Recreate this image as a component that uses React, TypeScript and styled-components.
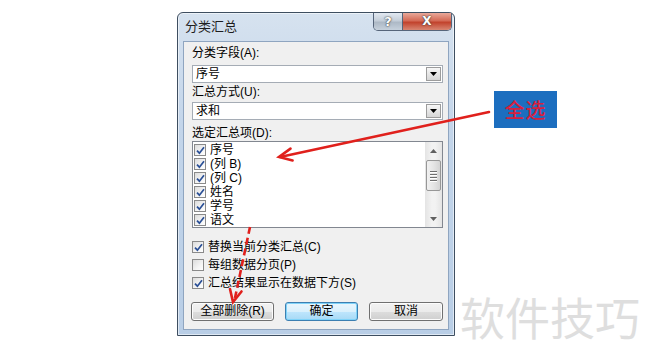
import React from "react";
import styled, { createGlobalStyle } from "styled-components";

const Global = createGlobalStyle`
  html, body { margin: 0; padding: 0; background: #fff; }
  body { font-family: "Liberation Sans", "Noto Sans CJK SC", sans-serif; }
`;

const Page = styled.div`
  position: relative;
  width: 647px;
  height: 364px;
  overflow: hidden;
  box-sizing: border-box;
  padding: 12px 0 0 177px;
  display: flex;
  align-items: flex-start;
  background: #fff;
`;

const Dialog = styled.div`
  width: 278px;
  height: 324px;
  box-sizing: border-box;
  border: 1px solid #3e4e60;
  border-radius: 6px 6px 0 0;
  background: linear-gradient(180deg, #d6e2ef 0%, #c3d5ea 35%, #b9cee6 100%);
  box-shadow: inset 0 0 0 1px rgba(255, 255, 255, 0.55);
  display: flex;
  flex-direction: column;
  padding: 0 5px 5px 5px;
`;

const TitleBar = styled.div`
  height: 28px;
  display: flex;
  align-items: flex-start;
  justify-content: space-between;
  margin-right: -3px;
`;

const Title = styled.div`
  font-size: 13px;
  line-height: 28px;
  padding-left: 2px;
  color: #1e1e1e;
`;

const CaptionGroup = styled.div`
  display: flex;
  border: 1px solid #56657a;
  border-top: none;
  border-radius: 0 0 5px 5px;
  overflow: hidden;
`;

const CaptionButton = styled.div<{ $close?: boolean }>`
  width: ${(p) => (p.$close ? 48 : 28)}px;
  height: 17px;
  display: flex;
  align-items: center;
  justify-content: center;
  color: #fff;
  font-family: "DejaVu Sans", sans-serif;
  font-weight: bold;
  font-size: ${(p) => (p.$close ? 12 : 13)}px;
  line-height: 17px;
  text-shadow: 0 0 1px #333, 0 0 2px #444;
  background: ${(p) =>
    p.$close
      ? "linear-gradient(180deg, #e9a99a 0%, #d46a56 45%, #c2432d 55%, #d88672 100%)"
      : "linear-gradient(180deg, #e2e9f1 0%, #c4ced9 45%, #adb9c6 55%, #c6d1dc 100%)"};
  border-left: ${(p) => (p.$close ? "1px solid #56657a" : "none")};
`;

const Client = styled.div`
  flex: 1;
  background: #f0f0f0;
  border: 1px solid #8fa5c0;
  display: flex;
  flex-direction: column;
  padding: 4px 5px 0 8px;
`;

const Label = styled.div<{ $mt?: number }>`
  font-size: 12px;
  line-height: 14px;
  height: 14px;
  color: #000;
  margin-top: ${(p) => p.$mt ?? 0}px;
  white-space: nowrap;
`;

const Combo = styled.div<{ $mt: number }>`
  height: 18px;
  box-sizing: border-box;
  margin-top: ${(p) => p.$mt}px;
  border: 1px solid #a5acb5;
  background: #fff;
  display: flex;
  align-items: center;
  justify-content: space-between;
  padding: 0 1px 0 3px;
  font-size: 12px;
  line-height: 14px;
  color: #000;
`;

const DropButton = styled.div`
  width: 15px;
  height: 14px;
  box-sizing: border-box;
  border: 1px solid #9c9c9c;
  background: linear-gradient(180deg, #f7f7f7 0%, #e6e6e6 50%, #d6d6d6 100%);
  display: flex;
  align-items: center;
  justify-content: center;
`;

const ListBox = styled.div`
  margin-top: 1px;
  height: 87px;
  box-sizing: border-box;
  border: 1px solid #828790;
  background: #fff;
  display: flex;
`;

const ListItems = styled.div`
  flex: 1;
  padding: 1px 0 0 1px;
  display: flex;
  flex-direction: column;
`;

const ListItem = styled.div`
  height: 14px;
  display: flex;
  align-items: center;
  gap: 4px;
  font-size: 12px;
  color: #000;
  white-space: nowrap;
`;

const ItemText = styled.div<{ $h: number }>`
  height: ${(p) => p.$h}px;
  line-height: ${(p) => p.$h}px;
`;

const Box = styled.div`
  width: 12px;
  height: 12px;
  box-sizing: border-box;
  border: 1px solid #8a8a8a;
  background: linear-gradient(135deg, #dcdcdc 0%, #f4f4f4 60%, #ffffff 100%);
  display: flex;
  align-items: center;
  justify-content: center;
  flex: none;
`;

const ScrollBar = styled.div`
  width: 17px;
  background: linear-gradient(90deg, #e4e4e4 0%, #f2f2f2 40%, #f2f2f2 60%, #e4e4e4 100%);
  display: flex;
  flex-direction: column;
  align-items: center;
`;

const ArrowCell = styled.div`
  width: 17px;
  height: 17px;
  display: flex;
  align-items: center;
  justify-content: center;
`;

const Thumb = styled.div`
  width: 15px;
  height: 31px;
  box-sizing: border-box;
  border: 1px solid #979797;
  border-radius: 2px;
  background: linear-gradient(90deg, #f1f1f1 0%, #e5e5e5 50%, #d4d4d4 100%);
  display: flex;
  flex-direction: column;
  align-items: center;
  justify-content: center;
  gap: 2px;
  margin-top: 1px;
`;

const Grip = styled.div`
  width: 7px;
  height: 1px;
  background: #6f6f6f;
  box-shadow: 0 1px 0 #fff;
`;

const Spacer = styled.div`
  flex: 1;
`;

const Options = styled.div`
  margin-top: 10px;
  display: flex;
  flex-direction: column;
`;

const OptionRow = styled.div`
  height: 18px;
  display: flex;
  align-items: center;
  gap: 4px;
  font-size: 12px;
  color: #000;
  white-space: nowrap;
`;

const ButtonRow = styled.div`
  margin-top: 10px;
  margin-left: -1px;
  display: flex;
  gap: 11px;
`;

const Button = styled.div<{ $w: number; $default?: boolean }>`
  width: ${(p) => p.$w}px;
  height: 19px;
  box-sizing: border-box;
  border: 1px solid ${(p) => (p.$default ? "#3c7fb1" : "#707070")};
  border-radius: 3px;
  background: ${(p) =>
    p.$default
      ? "linear-gradient(180deg, #eaf6fd 0%, #d9f0fc 50%, #bee6fd 51%, #a7d9f5 100%)"
      : "linear-gradient(180deg, #f2f2f2 0%, #ebebeb 50%, #dddddd 51%, #cfcfcf 100%)"};
  box-shadow: inset 0 0 0 1px ${(p) => (p.$default ? "#7fd3f9" : "#fcfcfc")};
  display: flex;
  align-items: center;
  justify-content: center;
  font-size: 12px;
  line-height: 17px;
  color: #000;
  white-space: nowrap;
`;

const RightCol = styled.div`
  display: flex;
  flex-direction: column;
  align-items: flex-start;
`;

const Badge = styled.div`
  margin: 79px 0 0 39px;
  width: 63px;
  height: 37px;
  background: #1c6ebf;
  display: flex;
  align-items: center;
  justify-content: center;
  font-family: "Noto Sans CJK SC", sans-serif;
  font-size: 20px;
  font-weight: 500;
  color: #d61f3e;
  letter-spacing: 1px;
`;

const Watermark = styled.div`
  margin: 165px 0 0 5px;
  font-family: "Noto Sans CJK SC", sans-serif;
  font-size: 45px;
  line-height: 48px;
  color: #dedede;
  white-space: nowrap;
`;

const Overlay = styled.svg`
  position: absolute;
  left: 0;
  top: 0;
  pointer-events: none;
`;

const Check = () => (
  <svg width="9" height="9" viewBox="0 0 9 9">
    <path d="M1 4.6 L3.4 7.2 L8 1.2" fill="none" stroke="#2a4f96" strokeWidth="1.7" />
  </svg>
);

const CheckBox = ({ checked }: { checked: boolean }) => <Box>{checked && <Check />}</Box>;

const Tri = ({ up, color = "#000" }: { up?: boolean; color?: string }) => (
  <svg width="7" height="4" viewBox="0 0 7 4">
    <path d={up ? "M0 4 L3.5 0 L7 4 Z" : "M0 0 L7 0 L3.5 4 Z"} fill={color} />
  </svg>
);

const items = ["序号", "(列 B)", "(列 C)", "姓名", "学号", "语文"];

export default function App() {
  return (
    <>
      <Global />
      <Page>
        <Dialog>
          <TitleBar>
            <Title>分类汇总</Title>
            <CaptionGroup>
              <CaptionButton>?</CaptionButton>
              <CaptionButton $close>X</CaptionButton>
            </CaptionGroup>
          </TitleBar>
          <Client>
            <Label>分类字段(A):</Label>
            <Combo $mt={5}>
              <ItemText $h={14}>序号</ItemText>
              <DropButton>
                <Tri />
              </DropButton>
            </Combo>
            <Label $mt={2}>汇总方式(U):</Label>
            <Combo $mt={3}>
              <ItemText $h={14}>求和</ItemText>
              <DropButton>
                <Tri />
              </DropButton>
            </Combo>
            <Label $mt={6}>选定汇总项(D):</Label>
            <ListBox>
              <ListItems>
                {items.map((t) => (
                  <ListItem key={t}>
                    <CheckBox checked />
                    <ItemText $h={14}>{t}</ItemText>
                  </ListItem>
                ))}
              </ListItems>
              <ScrollBar>
                <ArrowCell>
                  <Tri up color="#606060" />
                </ArrowCell>
                <Thumb>
                  <Grip />
                  <Grip />
                  <Grip />
                  <Grip />
                </Thumb>
                <Spacer />
                <ArrowCell>
                  <Tri color="#606060" />
                </ArrowCell>
              </ScrollBar>
            </ListBox>
            <Options>
              <OptionRow>
                <CheckBox checked />
                <ItemText $h={16}>替换当前分类汇总(C)</ItemText>
              </OptionRow>
              <OptionRow>
                <CheckBox checked={false} />
                <ItemText $h={16}>每组数据分页(P)</ItemText>
              </OptionRow>
              <OptionRow>
                <CheckBox checked />
                <ItemText $h={16}>汇总结果显示在数据下方(S)</ItemText>
              </OptionRow>
            </Options>
            <ButtonRow>
              <Button $w={83}>全部删除(R)</Button>
              <Button $w={73} $default>
                确定
              </Button>
              <Button $w={74}>取消</Button>
            </ButtonRow>
          </Client>
        </Dialog>
        <RightCol>
          <Badge>全选</Badge>
          <Watermark>软件技巧</Watermark>
        </RightCol>
        <Overlay width="647" height="364" viewBox="0 0 647 364">
          <g stroke="#e0201c" strokeWidth="2.6" strokeLinecap="round" fill="none">
            <line x1="489" y1="112" x2="280" y2="157" />
            <polyline points="292.6,160.5 279,157 290.5,148.6" />
            <line x1="250" y1="227" x2="235" y2="298" strokeDasharray="7 4" strokeLinecap="butt" />
            <polyline points="230,289 233,302 241.5,291.5" />
          </g>
        </Overlay>
      </Page>
    </>
  );
}
